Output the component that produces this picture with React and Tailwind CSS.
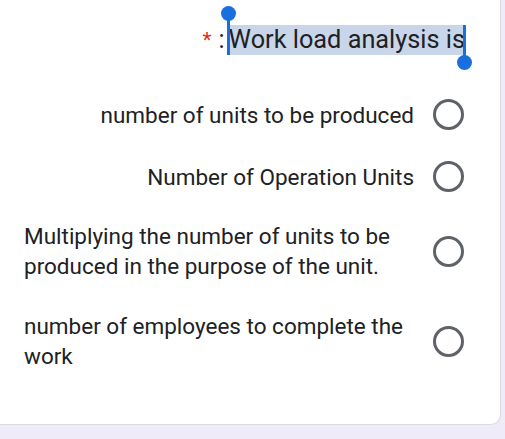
import React from "react";

function Radio() {
  return (
    <div className="shrink-0 w-[31px] h-[31px] rounded-full border-[3px] border-[#5f6368]" />
  );
}

function Option({ children, className = "" }) {
  return (
    <div className={"flex items-center justify-end gap-[19px] " + className}>
      <div className="max-w-[390px] text-left text-[22.5px] leading-[30px] text-[#202124]">
        {children}
      </div>
      <Radio />
    </div>
  );
}

export default function App() {
  return (
    <div
      className="w-[505px] h-[439px] bg-[#f0ebf8] overflow-hidden"
      style={{ fontFamily: "Roboto, 'Liberation Sans', sans-serif" }}
    >
      <div className="h-[425px] mr-[4px] bg-white rounded-br-[10px] border-r border-b border-[#dadce0] pr-[36px]">
        <div className="flex justify-end items-center pt-[25px] mr-[-1px] text-[25.3px] leading-[30px] text-[#202124]">
          <span className="text-[#d93025] text-[21px] mr-[7px]">*</span>
          <span className="mr-[3px]">:</span>
          <span className="relative bg-[#c9d6ea] pl-[1px]">
            <span className="absolute left-[-1px] top-[-12px] bottom-0 w-[3px] bg-[#1a6fdf]" />
            <span className="absolute left-[-7px] top-[-19px] w-[15px] h-[15px] rounded-full bg-[#1a6fdf]" />
            Work load analysis is
            <span className="absolute right-[-1px] top-0 bottom-[-6px] w-[3px] bg-[#1a6fdf]" />
            <span className="absolute right-[-7px] bottom-[-15px] w-[15px] h-[15px] rounded-full bg-[#1a6fdf]" />
          </span>
        </div>
        <div className="flex flex-col mt-[44px]">
          <Option>number of units to be produced</Option>
          <Option className="mt-[31px]">Number of Operation Units</Option>
          <Option className="mt-[29px]">Multiplying the number of units to be produced in the purpose of the unit.</Option>
          <Option className="mt-[30px]">number of employees to complete the work</Option>
        </div>
      </div>
    </div>
  );
}
